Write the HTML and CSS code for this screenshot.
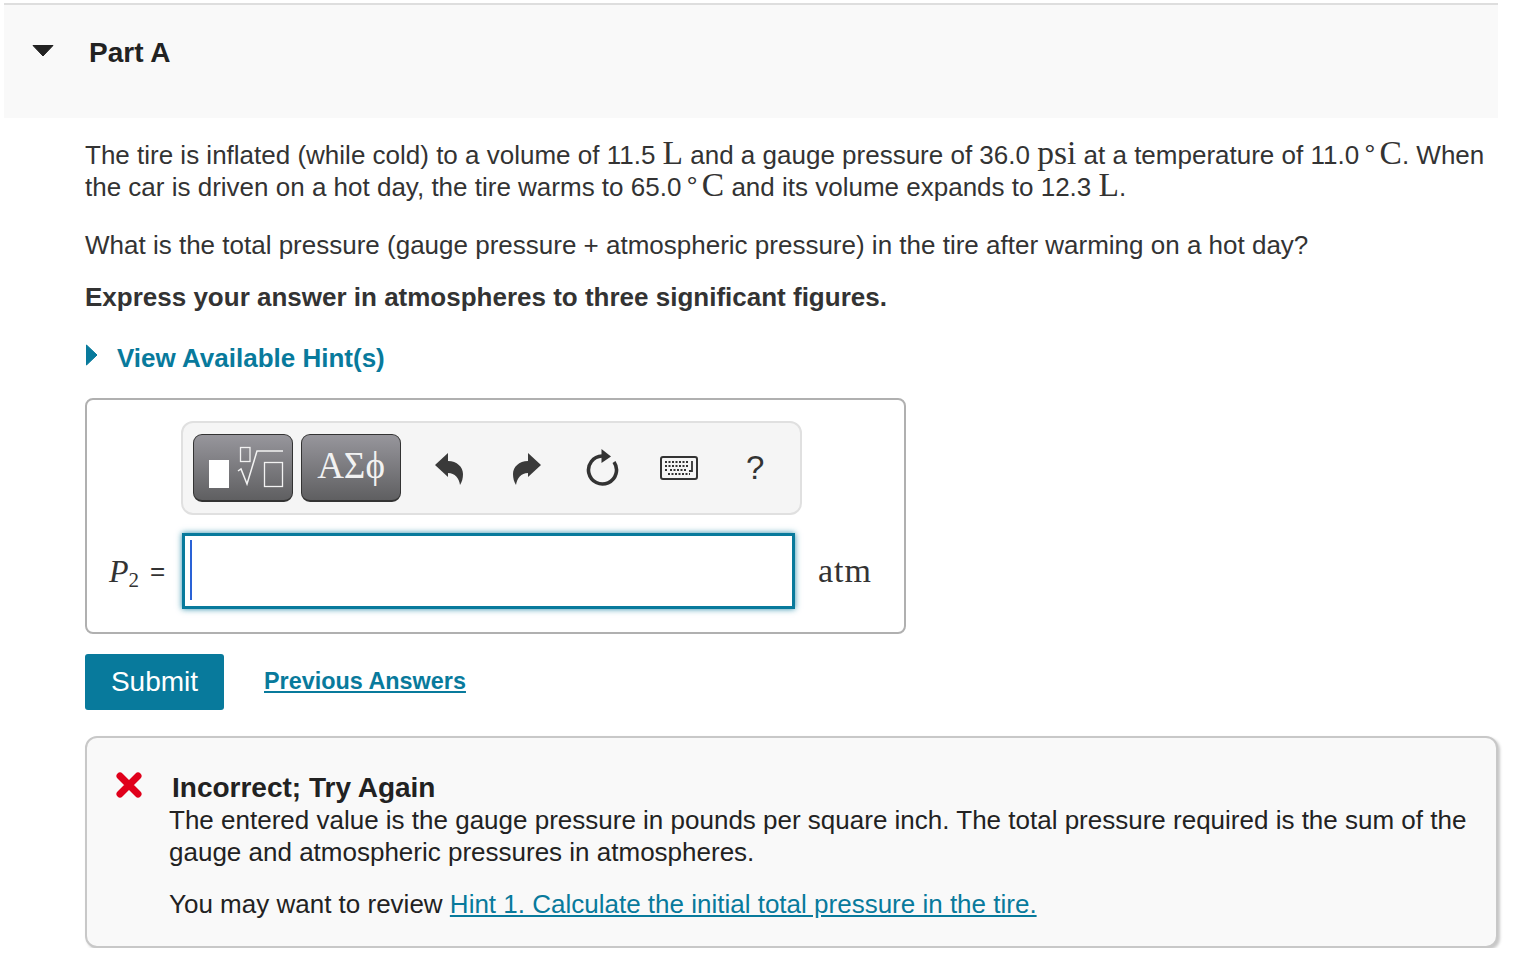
FILE: index.html
```html
<!DOCTYPE html>
<html lang="en">
<head>
<meta charset="utf-8">
<title>Part A</title>
<link rel="stylesheet" href="styles.css">
</head>
<body>
<main class="page">
  <header class="part-head">
    <svg class="caret-down" width="22" height="14" viewBox="0 0 22 14"><path d="M1 1.500h20L11 12z" fill="#222" stroke="#222" stroke-width="1" stroke-linejoin="round"/></svg>
    <h2 class="part-title">Part A</h2>
  </header>
  <section class="content">
    <p class="problem">The tire is inflated (while cold) to a volume of 11.5 <span class="m">L</span> and a gauge pressure of 36.0 <span class="m">psi</span> at a temperature of 11.0 <span class="deg">°</span><span class="m">C</span>. When the car is driven on a hot day, the tire warms to 65.0 <span class="deg">°</span><span class="m">C</span> and its volume expands to 12.3 <span class="m">L</span>.</p>
    <p class="question">What is the total pressure (gauge pressure + atmospheric pressure) in the tire after warming on a hot day?</p>
    <p class="instruction">Express your answer in atmospheres to three significant figures.</p>
    <div class="hint-row">
      <svg class="caret-right" width="13" height="22" viewBox="0 0 13 22"><path d="M1.500 1L12 11 1.500 21z" fill="#087a9c" stroke="#087a9c" stroke-linejoin="round"/></svg>
      <a class="hint-link" href="#">View Available Hint(s)</a>
    </div>
    <div class="answer-box">
      <div class="toolbar">
        <button class="tb-btn tb-templates" type="button" aria-label="Templates">
          <svg width="98" height="65" viewBox="0 0 98 65">
            <rect x="15" y="25" width="20" height="28" fill="#fff"/>
            <rect x="46.500" y="12.500" width="9.500" height="14" fill="none" stroke="#f2f2f2" stroke-width="1.300"/>
            <path d="M44 36l3-2 6 15 10-33h26" fill="none" stroke="#f2f2f2" stroke-width="1.500"/>
            <rect x="70.500" y="27.500" width="18" height="24" fill="none" stroke="#f2f2f2" stroke-width="1.300"/>
          </svg>
        </button>
        <button class="tb-btn tb-symbols" type="button">ΑΣϕ</button>
        <div class="tools">
          <svg class="tool" width="30" height="34" viewBox="0 0 30 34"><path d="M1 14L14 2v8c9 0 15 6 15 13 0 4-1 8-3 11-1-7-5-12-12-12v4z" fill="#3a3a3a"/></svg>
          <svg class="tool" width="30" height="34" viewBox="0 0 30 34"><path d="M29 14L16 2v8C7 10 1 16 1 23c0 4 1 8 3 11 1-7 5-12 12-12v4z" fill="#3a3a3a"/></svg>
          <svg class="tool" width="36" height="38" viewBox="0 0 36 38"><path d="M17 7A14 14 0 1 0 29 13" fill="none" stroke="#333" stroke-width="3.600"/><path d="M16.500 0L26 7.500 16.500 14z" fill="#333"/></svg>
          <svg class="tool" width="38" height="24" viewBox="0 0 38 24">
            <rect x="1" y="1" width="36" height="22" rx="2" fill="#f5f5f5" stroke="#333" stroke-width="2"/>
            <path d="M5 6h23M5 10h23M5 14h2M10 14h17M8 18h22" stroke="#333" stroke-width="2" stroke-dasharray="2 1.500" fill="none"/>
            <path d="M32 5v10h-3" stroke="#333" stroke-width="1.800" fill="none"/>
          </svg>
          <span class="tool help">?</span>
        </div>
      </div>
      <div class="input-row">
        <span class="var"><i>P</i><sub>2</sub></span>
        <span class="equals">=</span>
        <div class="math-input"><span class="cursor"></span></div>
        <span class="unit">atm</span>
      </div>
    </div>
    <div class="actions">
      <button class="submit" type="button">Submit</button>
      <a class="prev-link" href="#">Previous Answers</a>
    </div>
    <div class="feedback">
      <div class="fb-head">
        <svg class="fb-x" width="28" height="28" viewBox="0 0 28 28"><path d="M5 5L23 23M23 5L5 23" stroke="#e0001b" stroke-width="7" stroke-linecap="round"/></svg>
        <strong class="fb-title">Incorrect; Try Again</strong>
      </div>
      <p class="fb-text">The entered value is the gauge pressure in pounds per square inch. The total pressure required is the sum of the gauge and atmospheric pressures in atmospheres.</p>
      <p class="fb-review">You may want to review <a class="fb-link" href="#">Hint 1. Calculate the initial total pressure in the tire.</a></p>
    </div>
  </section>
</main>
</body>
</html>
```
FILE: styles.css
```css
* { box-sizing: border-box; }
html, body { margin: 0; padding: 0; background: #fff; }
body {
  font-family: "Liberation Sans", Arial, sans-serif;
  font-size: 26px;
  line-height: 32px;
  color: #333;
}
.page { width: 1494px; margin: 3px 0 0 4px; }
.part-head {
  height: 115px;
  background: #f9f9f9;
  border-top: 2px solid #dedede;
  display: flex;
  align-items: flex-start;
  padding: 32px 0 0 28px;
}
.caret-down { margin-top: 7px; }
.part-title {
  margin: 0 0 0 35px;
  font-size: 28px;
  line-height: 32px;
  font-weight: 700;
  color: #222;
}
.content { padding: 21px 0 0 81px; }
.content p { margin: 0; }
.m { font-family: "Liberation Serif", serif; font-size: 33.500px; line-height: 0; }
.deg { font-family: "Liberation Sans", sans-serif; font-size: 28px; line-height: 0; margin-left: -2px; margin-right: 4px; }
.question { padding-top: 26px; }
.instruction { padding-top: 20px; font-weight: 700; }
.hint-row { display: flex; align-items: center; gap: 19px; margin-top: 29px; height: 32px; }
.caret-right { margin-top: -6px; }
.hint-link { font-weight: 700; color: #087a9c; text-decoration: none; }
.answer-box {
  width: 821px;
  height: 236px;
  margin-top: 24px;
  border: 2px solid #b0b0b0;
  border-radius: 8px;
  padding: 21px 0 0 94px;
}
.toolbar {
  width: 621px;
  height: 94px;
  background: #f5f5f5;
  border: 2px solid #e0e0e0;
  border-radius: 12px;
  display: flex;
  align-items: center;
  padding-left: 10px;
  gap: 8px;
}
.tb-btn {
  width: 100px;
  height: 68px;
  padding: 0;
  border: 1px solid #333;
  border-bottom-width: 2px;
  border-radius: 9px;
  background: linear-gradient(#97969c, #5f5f61);
  color: #fff;
  display: flex;
  align-items: center;
  justify-content: center;
}
.tb-symbols { font-family: "Liberation Serif", serif; font-size: 37px; color: #f2f2f2; padding-bottom: 4px; }
.tools { display: flex; align-items: center; }
.tool { display: block; }
.tools svg:nth-child(1) { margin-left: 25px; }
.tools svg:nth-child(2) { margin-left: 48px; }
.tools svg:nth-child(3) { margin-left: 43px; }
.tools svg:nth-child(4) { margin-left: 39px; }
.help { margin-left: 48px; font-size: 33px; color: #333; }
.input-row { display: flex; align-items: center; margin-top: 18px; margin-left: -73px; height: 76px; }
.var { font-family: "Liberation Serif", serif; font-size: 32px; width: 40px; margin-left: 1px; margin-right: -1px; color: #333; }
.var sub { font-size: 21px; line-height: 0; vertical-align: -5px; font-style: normal; }
.equals { width: 34px; padding-left: 2px; font-size: 26px; }
.math-input {
  width: 613px;
  height: 76px;
  background: #fff;
  border: 3px solid #087a9c;
  box-shadow: 0 0 6px rgba(8, 122, 156, .85);
  padding: 4px 0 0 5px;
}
.cursor { display: block; width: 2px; height: 60px; background: #2a62d6; }
.unit { font-family: "Liberation Serif", serif; font-size: 34px; letter-spacing: 1px; margin-left: 23px; }
.actions { display: flex; align-items: center; gap: 40px; margin-top: 20px; height: 56px; }
.submit {
  width: 139px;
  height: 56px;
  border: 0;
  border-radius: 3px;
  background: #087a9c;
  color: #fff;
  font: 28px "Liberation Sans", Arial, sans-serif;
}
.prev-link { font-weight: 700; font-size: 23.400px; line-height: 28px; margin-top: -2px; color: #087a9c; }
.feedback {
  width: 1413px;
  height: 212px;
  margin-top: 26px;
  background: #f9f9f9;
  border: 2px solid #c8c8c8;
  border-radius: 12px;
  box-shadow: 2px 2px 3px #c8c8c8;
  padding: 33px 0 0 82px;
  color: #222;
}
.fb-head { display: flex; align-items: center; margin-left: -54px; height: 33px; }
.fb-x { margin-top: -6px; }
.fb-title { margin-left: 29px; font-size: 28px; color: #222; }
.content .fb-text { width: 1320px; }
.content .fb-review { padding-top: 20px; }
.fb-link { color: #087a9c; }
```
